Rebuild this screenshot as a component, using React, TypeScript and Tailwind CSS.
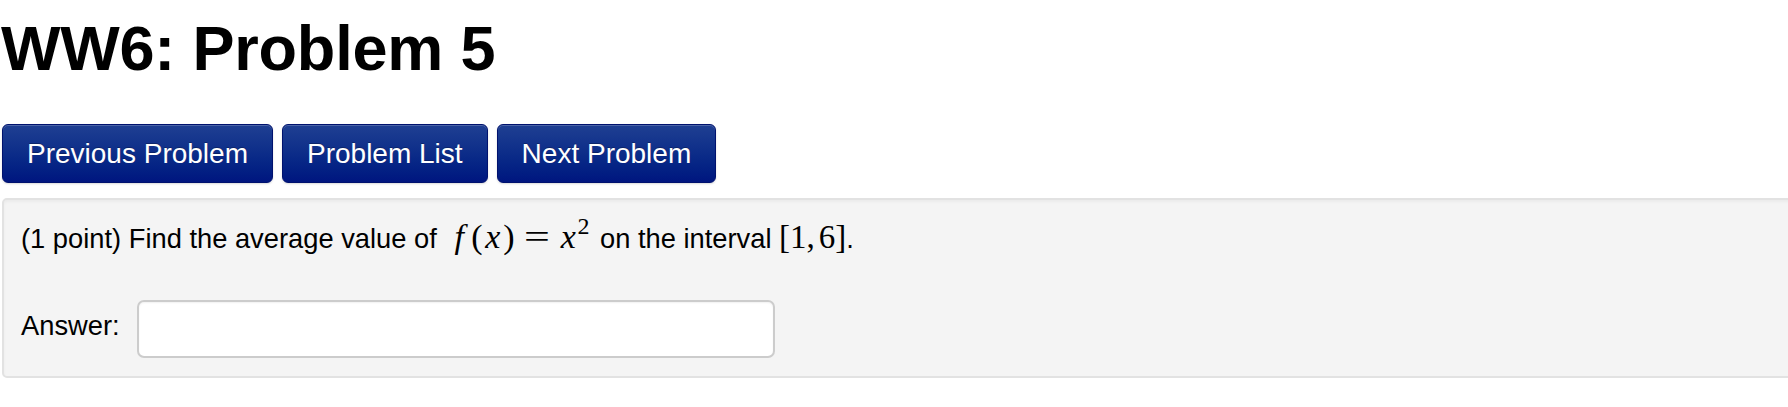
import React from 'react';

const navButtons = ['Previous Problem', 'Problem List', 'Next Problem'];

const App: React.FC = () => {
  return (
    <div className="h-[407px] w-full overflow-hidden bg-white font-['Liberation_Sans',Arial,sans-serif] text-black">
      {/* Title */}
      <h1 className="pt-[17px] pl-[1px] text-[63px] font-bold leading-[63px] tracking-[-0.2px]">
        WW6: Problem 5
      </h1>

      {/* Navigation */}
      <div className="mt-[44px] flex gap-[9px] pl-[2px]">
        {navButtons.map((label) => (
          <button
            key={label}
            type="button"
            className="flex h-[59px] items-center rounded-[6px] border border-[#00126e] bg-gradient-to-b from-[#1f3f92] to-[#00157f] px-[24px] text-[28px] leading-[28px] text-white shadow-[inset_0_1px_0_rgba(255,255,255,0.2),0_1px_2px_rgba(0,0,0,0.15)] [text-shadow:0_-1px_0_rgba(0,0,0,0.25)]"
          >
            {label}
          </button>
        ))}
      </div>

      {/* Problem body */}
      <div className="mt-[15px] ml-[2px] mr-[-6px] h-[180px] rounded-[5px] border-2 border-[#e2e2e2] bg-[#f4f4f4] px-[17px] pt-[19px] shadow-[inset_0_2px_3px_rgba(0,0,0,0.04)]">
        <p className="text-[27.3px] leading-[39px]">
          (1 point) Find the average value of{' '}
          <span className="ml-[10px] font-['Liberation_Serif','Times_New_Roman',serif] text-[34px] leading-none">
            <i className="inline-block w-[16px]">f</i>
            <span className="inline-block w-[13px] text-center">(</span>
            <i className="inline-block w-[19px] text-center">x</i>
            <span className="inline-block w-[13px] text-center">)</span>
            <span className="mx-[9px] inline-block w-[26px] scale-x-[1.35] text-center">=</span>
            <i className="inline-block w-[18px] text-center">x</i>
            <span className="relative bottom-[14px] text-[24px]">2</span>
          </span>{' '}
          <span className="ml-[3px]">on the interval</span>{' '}
          <span className="font-['Liberation_Serif','Times_New_Roman',serif] text-[33px] leading-none">
            [1,<span className="ml-[4px]">6</span>]
          </span>
          .
        </p>

        <div className="mt-[42px] flex items-center gap-[17px]">
          <label htmlFor="answer" className="pb-[6px] text-[27.3px] leading-[28px]">
            Answer:
          </label>
          <input
            id="answer"
            type="text"
            className="h-[58px] w-[638px] rounded-[7px] border-2 border-[#cccccc] bg-white px-3 text-[28px] shadow-[inset_0_1px_2px_rgba(0,0,0,0.06)] outline-none"
          />
        </div>
      </div>
    </div>
  );
};

export default App;
